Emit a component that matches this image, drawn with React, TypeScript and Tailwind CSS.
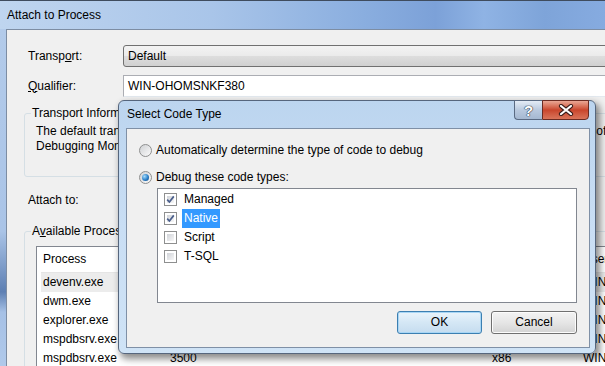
import React from "react";

const processes = [
  ["devenv.exe", "3768", "Start Page - Microsoft Visual Studio", "Managed, x86", "WIN-OHOMSNKF380\\Admin"],
  ["dwm.exe", "2160", "", "x86", "WIN-OHOMSNKF380\\Admin"],
  ["explorer.exe", "2232", "", "x86", "WIN-OHOMSNKF380\\Admin"],
  ["mspdbsrv.exe", "3200", "", "x86", "WIN-OHOMSNKF380\\Admin"],
  ["mspdbsrv.exe", "3500", "", "x86", "WIN-OHOMSNKF380\\Admin"],
];

const codeTypes = [
  { name: "Managed", checked: true, selected: false },
  { name: "Native", checked: true, selected: true },
  { name: "Script", checked: false, selected: false },
  { name: "T-SQL", checked: false, selected: false },
];

const Radio = ({ checked }: { checked?: boolean }) => (
  <span className="w-[13px] h-[13px] shrink-0 rounded-full border border-[#8e8f8f] bg-gradient-to-br from-[#cfd1d4] to-[#fbfbfb] flex items-center justify-center">
    {checked && (
      <span className="w-[7px] h-[7px] rounded-full bg-[radial-gradient(circle_at_35%_35%,#a6dcfc,#2a7fc8_55%,#0c4078)]" />
    )}
  </span>
);

const Checkbox = ({ checked }: { checked?: boolean }) => (
  <span className="relative w-[13px] h-[13px] shrink-0 border border-[#8e8f8f] bg-white p-[2px]">
    <span className="block w-full h-full bg-gradient-to-br from-[#d0d3d8] to-[#f7f7f7]" />
    {checked && (
      <svg className="absolute left-0 top-0" width="11" height="11" viewBox="0 0 11 11">
        <path d="M2.2 5.6 L4.4 8 L8.8 2.4" fill="none" stroke="#4b5f8c" strokeWidth="1.7" />
      </svg>
    )}
  </span>
);

const SelectCodeType = () => (
  <div className="absolute left-[118px] top-[100px] w-[478px] h-[254px] rounded-[6px] border border-[#56667d] bg-gradient-to-b from-[#bcd5ef] via-[#c9def4] to-[#cfe3f6] shadow-[3px_4px_7px_1px_rgba(0,0,0,0.45)] flex flex-col">
    <div className="flex h-[27px] shrink-0">
      <div className="flex-1 self-center pl-[8px] leading-[15px]">Select Code Type</div>
      <div className="flex mr-[6px] mt-[-1px] h-[20px]">
        <div className="w-[28px] border border-[#5a6a82] border-r-0 rounded-bl-[4px] bg-gradient-to-b from-[#e4ecf6] via-[#b9c9de] to-[#a5b8d1] flex items-center justify-center text-[15px] font-bold leading-none text-white [text-shadow:0_0_1px_#2a3445,0_0_1px_#2a3445,0_0_1px_#2a3445]">
          ?
        </div>
        <div className="w-[47px] border border-[#6b2b22] rounded-br-[4px] bg-gradient-to-b from-[#e9a795] via-[#c9452c] to-[#d9745a] flex items-center justify-center">
          <svg width="16" height="12" viewBox="0 0 16 12">
            <path d="M3 2 L13 10 M13 2 L3 10" stroke="#3b1d1a" strokeWidth="4.2" strokeLinecap="round" />
            <path d="M3 2 L13 10 M13 2 L3 10" stroke="#ffffff" strokeWidth="2.2" strokeLinecap="round" />
          </svg>
        </div>
      </div>
    </div>
    <div className="ml-[7px] mr-[5px] h-[220px] border border-[#7f90a6] bg-[#f0f0f0] flex flex-col">
      <div className="mt-[14px] h-[15px] pl-[12px] flex items-center gap-[4px]">
        <Radio />
        <span>Automatically determine the type of code to debug</span>
      </div>
      <div className="mt-[12px] h-[15px] pl-[12px] flex items-center gap-[4px]">
        <Radio checked />
        <span>Debug these code types:</span>
      </div>
      <div className="mt-[3px] ml-[30px] w-[420px] h-[115px] border border-[#828790] bg-white pt-[1px]">
        {codeTypes.map((t) => (
          <div key={t.name} className="h-[19px] flex items-center pl-[6px]">
            <Checkbox checked={t.checked} />
            <span
              className={
                t.selected
                  ? "ml-[5px] px-[2px] h-[19px] leading-[19px] bg-[#3399ff] text-white"
                  : "ml-[5px] px-[2px] h-[19px] leading-[19px]"
              }
            >
              {t.name}
            </span>
          </div>
        ))}
      </div>
      <div className="mt-[8px] pr-[12px] flex justify-end gap-[9px]">
        <button className="w-[85px] h-[23px] rounded-[3px] border border-[#3c7fb1] bg-gradient-to-b from-[#eaf4fb] via-[#d4e7f5] to-[#c5dcef] shadow-[inset_0_0_0_1px_#a8d6f5]">
          OK
        </button>
        <button className="w-[86px] h-[23px] rounded-[3px] border border-[#707070] bg-gradient-to-b from-[#f3f3f3] via-[#e6e6e6] to-[#d3d3d3] shadow-[inset_0_0_0_1px_#fcfcfc]">
          Cancel
        </button>
      </div>
    </div>
  </div>
);

export default function App() {
  return (
    <div className="relative w-[605px] h-[366px] overflow-hidden flex flex-col font-['Liberation_Sans',Arial,sans-serif] text-[12px] leading-[15px] text-black">
      <div className="h-[29px] shrink-0 border-t border-[#3f4c5e] bg-[linear-gradient(90deg,#bfd5ef_0%,#a9c5e9_35%,#8aaedf_60%,#7ca1d8_72%,#8fb3e4_80%,#7ea4d9_90%,#86abe0_100%)] pl-[7px] flex items-center">
        Attach to Process
      </div>
      <div className="flex flex-1 min-h-0">
        <div className="w-[6px] shrink-0 bg-[linear-gradient(180deg,#b3cbea_0%,#aac4e7_60%,#5d7fb3_78%,#a6c1e6_84%,#b0c9ea_100%)]" />
        <div className="flex-1 min-w-0 overflow-hidden border-l border-t border-[#7d8da3] bg-[#f0f0f0] flex flex-col">
          <div className="mt-[15px] pl-[21px] flex items-center">
            <span className="w-[95px] shrink-0">
              Transp<span className="underline">o</span>rt:
            </span>
            <div className="w-[520px] shrink-0 h-[22px] rounded-[3px] border border-[#707070] bg-[linear-gradient(180deg,#f3f3f3_0%,#ebebeb_48%,#dddddd_52%,#d0d0d0_100%)] pl-[4px] flex items-center">
              Default
            </div>
          </div>
          <div className="mt-[8px] pl-[21px] flex items-center">
            <span className="w-[95px] shrink-0">
              <span className="underline">Q</span>ualifier:
            </span>
            <div className="w-[520px] shrink-0 h-[22px] border border-[#abadb3] border-b-[#e3e9ef] bg-white pl-[4px] flex items-center">
              WIN-OHOMSNKF380
            </div>
          </div>
          <fieldset className="mt-[9px] ml-[17px] w-[640px] shrink-0 border border-[#d5dfe5] rounded-[3px] px-[6px] pb-[22px]">
            <legend className="px-[1px] leading-[15px]">Transport Information</legend>
            <div className="mt-[3px] pl-[5px] whitespace-nowrap">
              The default transport lets you select processes on this computer or a remote computer running the Microsoft Visual Studio Remote
            </div>
            <div className="pl-[5px] whitespace-nowrap">Debugging Monitor (MSVSMON.EXE).</div>
          </fieldset>
          <div className="mt-[16px] pl-[21px] h-[22px] flex items-center">
            <span className="w-[95px] shrink-0">Attach to:</span>
            <span>Automatic: Native code</span>
          </div>
          <fieldset className="mt-[16px] ml-[17px] w-[640px] shrink-0 border border-[#d5dfe5] rounded-[3px] px-[6px] pb-[10px]">
            <legend className="px-[1px] leading-[15px]">
              A<span className="underline">v</span>ailable Processes
            </legend>
            <div className="mt-[7px] ml-[5px] border border-[#828790] bg-white">
              <div className="ml-[4px] h-[26px] grid grid-cols-[127px_60px_262px_91px_200px] items-center border-b border-[#e5e5e5]">
                {["Process", "ID", "Title", "Type", "User Name"].map((h) => (
                  <div key={h} className="pl-[2px] whitespace-nowrap">
                    {h}
                  </div>
                ))}
              </div>
              {processes.map((p, i) => (
                <div
                  key={i}
                  className={
                    i === 0
                      ? "ml-[4px] h-[19px] grid grid-cols-[127px_60px_262px_91px_200px] items-center bg-[#ececec]"
                      : "ml-[4px] h-[19px] grid grid-cols-[127px_60px_262px_91px_200px] items-center"
                  }
                >
                  {p.map((c, j) => (
                    <div key={j} className="pl-[2px] whitespace-nowrap overflow-hidden">
                      {c}
                    </div>
                  ))}
                </div>
              ))}
            </div>
          </fieldset>
        </div>
      </div>
      <SelectCodeType />
    </div>
  );
}
